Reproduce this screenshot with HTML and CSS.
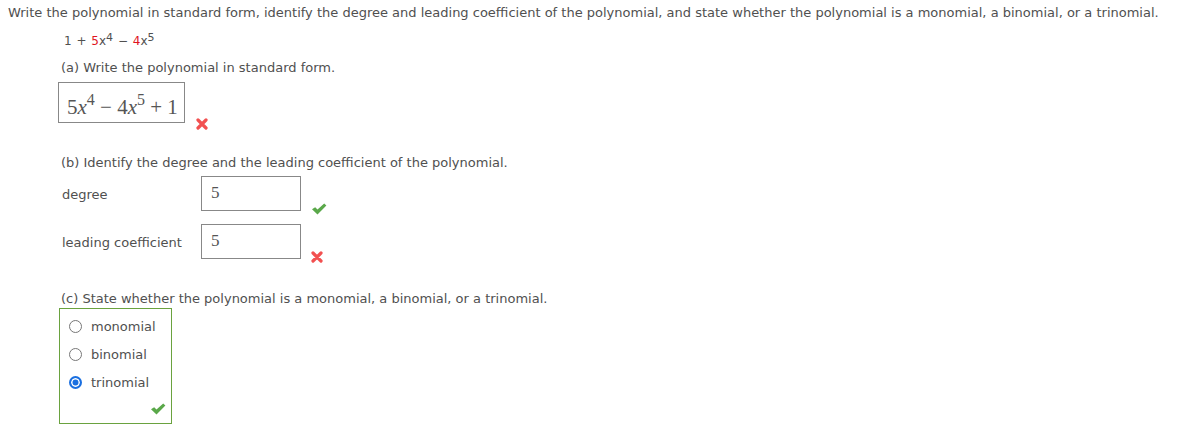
FILE: index.html
```html
<!DOCTYPE html>
<html>
<head>
<meta charset="utf-8">
<link rel="stylesheet" href="styles.css">
</head>
<body>
<div class="page">
  <p class="prompt">Write the polynomial in standard form, identify the degree and leading coefficient of the polynomial, and state whether the polynomial is a monomial, a binomial, or a trinomial.</p>
  <p class="expr">1 + <span class="red">5</span>x<sup>4</sup> &minus; <span class="red">4</span>x<sup>5</sup></p>

  <p class="part">(a) Write the polynomial in standard form.</p>
  <div class="answer-row">
    <div class="mathbox">5<i>x</i><sup>4</sup> &minus; 4<i>x</i><sup>5</sup> + 1</div>
    <svg class="mark cross" width="12" height="12" viewBox="0 0 12 12"><path d="M2 2 L10 10 M10 2 L2 10" stroke="#f25050" stroke-width="3.2" stroke-linecap="round"/></svg>
  </div>

  <p class="part part-b">(b) Identify the degree and the leading coefficient of the polynomial.</p>
  <div class="field first">
    <span class="label">degree</span>
    <div class="numbox">5</div>
    <svg class="mark check" width="16" height="12" viewBox="0 0 16 12"><path d="M1 6.2 L4.2 4.2 L6.5 6.6 L13.2 0.6 L15.4 2.6 L6.5 11.4 Z" fill="#5aa84a"/></svg>
  </div>
  <div class="field">
    <span class="label">leading coefficient</span>
    <div class="numbox">5</div>
    <svg class="mark cross" width="12" height="12" viewBox="0 0 12 12"><path d="M2 2 L10 10 M10 2 L2 10" stroke="#f25050" stroke-width="3.2" stroke-linecap="round"/></svg>
  </div>

  <p class="part part-c">(c) State whether the polynomial is a monomial, a binomial, or a trinomial.</p>
  <div class="choices">
    <div class="choice"><span class="radio"></span>monomial</div>
    <div class="choice"><span class="radio"></span>binomial</div>
    <div class="choice"><span class="radio on"></span>trinomial</div>
    <svg class="group-check" width="16" height="12" viewBox="0 0 16 12"><path d="M1 6.2 L4.2 4.2 L6.5 6.6 L13.2 0.6 L15.4 2.6 L6.5 11.4 Z" fill="#5aa84a"/></svg>
  </div>
</div>
</body>
</html>
```

FILE: styles.css
```css
html, body { margin: 0; padding: 0; background: #fff; }
body { font-family: "DejaVu Sans", Verdana, sans-serif; font-size: 13px; color: #505050; }
.page { padding: 5px 0 0 8px; }
p { margin: 0; }
.prompt { line-height: 16px; }
.expr { font-size: 12px; margin: 13px 0 0 56px; line-height: 14px; word-spacing: 1px; }
.expr sup { font-size: 11px; vertical-align: 4px; line-height: 0; }
.red { color: #e0141e; }
.part { margin: 12px 0 0 53px; line-height: 16px; }
.answer-row { display: flex; align-items: flex-end; margin: 6px 0 0 50px; }
.mathbox { border: 1px solid #888; height: 41px; width: 127px; box-sizing: border-box; padding: 0 0 0 8px; font-family: "Liberation Serif", "Times New Roman", serif; font-size: 21px; line-height: 48px; color: #555; white-space: nowrap; }
.mathbox i { font-style: italic; }
.mathbox sup { font-size: 16px; vertical-align: 9px; line-height: 0; }
.answer-row .mark { margin: 0 0 -7px 11px; }
.part-b { margin-top: 32px; }
.field { display: flex; align-items: flex-end; margin: 13px 0 0 54px; }
.field.first { margin-top: 5px; }
.label { width: 139px; align-self: center; line-height: 16px; padding-top: 3px; }
.numbox { width: 100px; height: 35px; box-sizing: border-box; border: 1px solid #888; font-family: "Liberation Serif", "Times New Roman", serif; font-size: 17px; line-height: 32px; padding-left: 9px; color: #555; }
.field .mark { margin: 0 0 -4px 10px; }
.part-c { margin-top: 32px; }
.choices { position: relative; margin: 1px 0 0 51px; width: 113px; height: 116px; box-sizing: border-box; border: 1px solid #6aa23f; padding-top: 3px; }
.choice { display: flex; align-items: center; height: 28px; padding-left: 9px; }
.radio { width: 13px; height: 13px; border: 1px solid #777; border-radius: 50%; margin-right: 9px; box-sizing: border-box; background: #fff; }
.radio.on { border: 2px solid #1a6fe0; box-shadow: inset 0 0 0 1.5px #fff; background: #1a6fe0; }
.group-check { position: absolute; right: 5px; bottom: 8px; }
```
